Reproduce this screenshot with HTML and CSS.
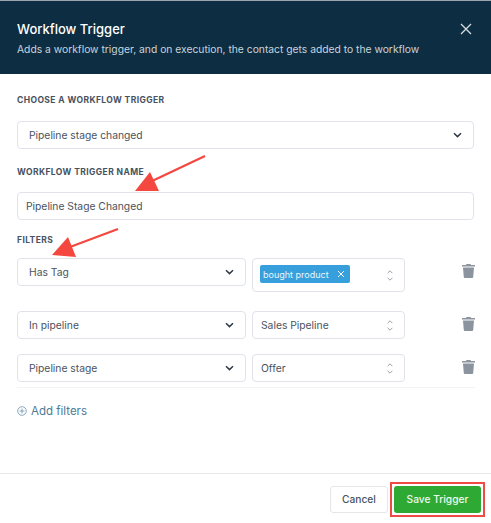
FILE: index.html
```html
<!DOCTYPE html>
<html lang="en">
<head>
    <meta charset="UTF-8">
    <meta name="viewport" content="width=device-width, initial-scale=1.0">
    <title>Workflow Trigger</title>
    <link rel="stylesheet" href="styles.css">
</head>
<body>
    <div class="modal">
        <div class="header">
            <div>
                <div class="title">Workflow Trigger</div>
                <div class="subtitle">Adds a workflow trigger, and on execution, the contact gets added to the workflow</div>
            </div>
            <svg class="close" width="14" height="14" viewBox="0 0 14 14">
                <path d="M2 2 L12 12 M12 2 L2 12"></path>
            </svg>
        </div>

        <div class="body">
            <div class="label label-first">CHOOSE A WORKFLOW TRIGGER</div>
            <div class="field field-full">
                <span>Pipeline stage changed</span>
                <svg class="chevron" width="9" height="6" viewBox="0 0 9 6"><path d="M1 1.2 L4.5 4.6 L8 1.2"></path></svg>
            </div>

            <div class="label label-name">WORKFLOW TRIGGER NAME</div>
            <div class="field field-full field-input">Pipeline Stage Changed</div>

            <div class="label label-filters">FILTERS</div>
            <div class="filters">
                <div class="filter-row filter-row-tag">
                    <div class="field field-left">
                        <span>Has Tag</span>
                        <svg class="chevron" width="9" height="6" viewBox="0 0 9 6"><path d="M1 1.2 L4.5 4.6 L8 1.2"></path></svg>
                    </div>
                    <div class="field field-right field-tall">
                        <span class="tag">bought product
                            <svg width="8" height="8" viewBox="0 0 8 8"><path d="M1 1 L7 7 M7 1 L1 7"></path></svg>
                        </span>
                        <svg class="updown" width="6" height="11" viewBox="0 0 6 11"><path d="M0.6 3.2 L3 0.8 L5.4 3.2 M0.6 7.8 L3 10.2 L5.4 7.8"></path></svg>
                    </div>
                    <svg class="trash" width="13" height="14" viewBox="0 0 13 14"><path d="M4.5 0 H8.5 L9 1 H13 V2.6 H0 V1 H4 Z M1 3.6 H12 L11.2 13 Q11.1 14 10.1 14 H2.9 Q1.9 14 1.8 13 Z"></path></svg>
                </div>
                <div class="filter-row filter-row-pipeline">
                    <div class="field field-left">
                        <span>In pipeline</span>
                        <svg class="chevron" width="9" height="6" viewBox="0 0 9 6"><path d="M1 1.2 L4.5 4.6 L8 1.2"></path></svg>
                    </div>
                    <div class="field field-right">
                        <span>Sales Pipeline</span>
                        <svg class="updown" width="6" height="11" viewBox="0 0 6 11"><path d="M0.6 3.2 L3 0.8 L5.4 3.2 M0.6 7.8 L3 10.2 L5.4 7.8"></path></svg>
                    </div>
                    <svg class="trash" width="13" height="14" viewBox="0 0 13 14"><path d="M4.5 0 H8.5 L9 1 H13 V2.6 H0 V1 H4 Z M1 3.6 H12 L11.2 13 Q11.1 14 10.1 14 H2.9 Q1.9 14 1.8 13 Z"></path></svg>
                </div>
                <div class="filter-row">
                    <div class="field field-left">
                        <span>Pipeline stage</span>
                        <svg class="chevron" width="9" height="6" viewBox="0 0 9 6"><path d="M1 1.2 L4.5 4.6 L8 1.2"></path></svg>
                    </div>
                    <div class="field field-right">
                        <span>Offer</span>
                        <svg class="updown" width="6" height="11" viewBox="0 0 6 11"><path d="M0.6 3.2 L3 0.8 L5.4 3.2 M0.6 7.8 L3 10.2 L5.4 7.8"></path></svg>
                    </div>
                    <svg class="trash" width="13" height="14" viewBox="0 0 13 14"><path d="M4.5 0 H8.5 L9 1 H13 V2.6 H0 V1 H4 Z M1 3.6 H12 L11.2 13 Q11.1 14 10.1 14 H2.9 Q1.9 14 1.8 13 Z"></path></svg>
                </div>
            </div>

            <div class="add-filters">
                <svg width="10" height="10" viewBox="0 0 10 10"><circle cx="5" cy="5" r="4.3"></circle><path d="M5 2.5 V7.5 M2.5 5 H7.5"></path></svg>
                <span>Add filters</span>
            </div>
        </div>

        <div class="footer">
            <div class="btn btn-cancel">Cancel</div>
            <div class="btn-outline">
                <div class="btn btn-save">Save Trigger</div>
            </div>
        </div>
    </div>

    <!-- red annotation arrows drawn over the form -->
    <svg class="arrows" width="491" height="523" viewBox="0 0 491 523">
        <path class="arrow-line" d="M205 156 L150 182"></path>
        <polygon class="arrow-head" points="135,191 150,172 159,191"></polygon>
        <path class="arrow-line" d="M118 229 L70 247"></path>
        <polygon class="arrow-head" points="52,255 68,237 76,257"></polygon>
    </svg>
</body>
</html>
```

FILE: styles.css
```css
* {
    box-sizing: border-box;
}
body {
    margin: 0;
    width: 491px;
    height: 523px;
    overflow: hidden;
    background-color: #fff;
    font-family: Inter, "Liberation Sans", sans-serif;
    color: #3f4a57;
}
.modal {
    display: flex;
    flex-direction: column;
    height: 523px;
    border-top: 1px solid #9aa5ad;
}
.header {
    display: flex;
    flex-shrink: 0;
    justify-content: space-between;
    height: 73px;
    padding: 18px 18px 0 17px;
    background-color: #0d2d42;
}
.title {
    font-size: 13px;
    font-weight: 500;
    line-height: 20px;
    color: #fff;
}
.subtitle {
    margin-top: 1px;
    font-size: 10.3px;
    line-height: 18px;
    color: #c9d4dc;
}
.close {
    margin-top: 3px;
}
.close path {
    fill: none;
    stroke: #d5dde3;
    stroke-width: 1.3;
}
.body {
    flex: 1;
    padding: 0 17px;
}
.label {
    font-size: 8.5px;
    font-weight: 700;
    line-height: 12px;
    letter-spacing: 0.4px;
    color: #47525f;
}
.label-first {
    margin-top: 20px;
    margin-bottom: 15px;
}
.label-name {
    margin-top: 17px;
    margin-bottom: 14px;
}
.label-filters {
    margin-top: 14px;
    margin-bottom: 12px;
}
.field {
    display: flex;
    flex-shrink: 0;
    align-items: center;
    justify-content: space-between;
    height: 28px;
    padding: 0 11px;
    background-color: #fff;
    border: 1px solid #e0e3e9;
    border-radius: 4px;
    font-size: 10.3px;
    color: #4a5360;
}
.field-full {
    width: 457px;
}
.field-input {
    padding-left: 8px;
}
.field-left {
    width: 229px;
}
.field-right {
    width: 153px;
    margin-left: 6px;
    padding: 0 11px 0 8px;
}
.field-tall {
    height: 34px;
}
.filters {
    width: 458px;
    padding-bottom: 5px;
    border-bottom: 1px solid #f3f4f6;
}
.filter-row {
    display: flex;
    align-items: flex-start;
}
.filter-row-tag {
    margin-bottom: 19px;
}
.filter-row-pipeline {
    margin-bottom: 15px;
}
.chevron path {
    fill: none;
    stroke: #2f3a48;
    stroke-width: 1.5;
}
.updown path {
    fill: none;
    stroke: #8b95a1;
    stroke-width: 0.9;
}
.tag {
    display: flex;
    align-items: center;
    gap: 8px;
    align-self: flex-start;
    height: 18px;
    margin: 6px 0 0 -1px;
    padding: 0 5px 0 3px;
    background-color: #37a0dc;
    border-radius: 2px;
    font-size: 9px;
    color: #e9f5fc;
}
.tag path {
    fill: none;
    stroke: #fff;
    stroke-width: 1;
}
.trash {
    flex-shrink: 0;
    margin: 6px 0 0 57px;
}
.trash path {
    fill: #8b939e;
}
.add-filters {
    display: flex;
    align-items: center;
    gap: 4px;
    margin-top: 15px;
    font-size: 11.5px;
    line-height: 16px;
    color: #4d7a96;
}
.add-filters circle,
.add-filters path {
    fill: none;
    stroke: #6a93ad;
    stroke-width: 0.8;
}
.footer {
    display: flex;
    flex-shrink: 0;
    justify-content: flex-end;
    align-items: center;
    height: 50px;
    padding: 1px 6px 0 0;
    border-top: 1px solid #e8eaed;
}
.btn {
    display: flex;
    align-items: center;
    justify-content: center;
    height: 27px;
    border-radius: 3px;
    font-size: 10.2px;
    font-weight: 500;
}
.btn-cancel {
    width: 58px;
    margin-right: 2px;
    border: 1px solid #e4e6ea;
    color: #4a5360;
}
.btn-save {
    width: 87px;
    background-color: #2eaa34;
    color: #eef9ef;
}
.btn-outline {
    padding: 2px;
    border: 2px solid #ee4b45;
}
.arrows {
    position: absolute;
    top: 0;
    left: 0;
}
.arrow-line {
    fill: none;
    stroke: #f4473f;
    stroke-width: 2.2;
}
.arrow-head {
    fill: #f4473f;
}
```
